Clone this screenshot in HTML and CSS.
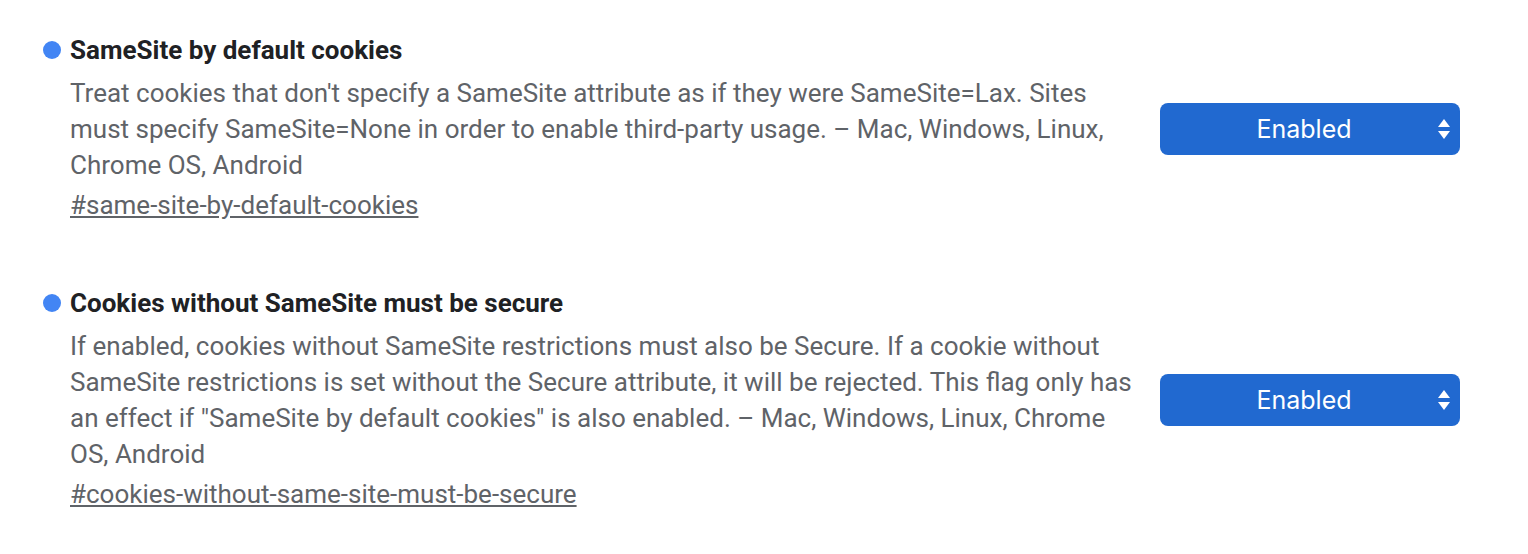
FILE: index.html
```html
<!DOCTYPE html>
<html>
<head>
<meta charset="utf-8">
<link rel="stylesheet" href="styles.css">
</head>
<body>
<div class="page">
  <div class="experiment">
    <h3 class="name"><span class="dot"></span>SameSite by default cookies</h3>
    <div class="row">
      <p class="desc">Treat cookies that don't specify a SameSite attribute as if they were SameSite=Lax. Sites must specify SameSite=None in order to enable third-party usage. – Mac, Windows, Linux, Chrome OS, Android</p>
      <div class="select"><span>Enabled</span>
        <svg class="arrows" width="12" height="20" viewBox="0 0 12 20"><path d="M6 0 L12 8 H0 Z M0 12 H12 L6 20 Z" fill="#fff"/></svg>
      </div>
    </div>
    <a class="link" href="#">#same-site-by-default-cookies</a>
  </div>
  <div class="experiment">
    <h3 class="name"><span class="dot"></span>Cookies without SameSite must be secure</h3>
    <div class="row">
      <p class="desc">If enabled, cookies without SameSite restrictions must also be Secure. If a cookie without SameSite restrictions is set without the Secure attribute, it will be rejected. This flag only has an effect if "SameSite by default cookies" is also enabled. – Mac, Windows, Linux, Chrome OS, Android</p>
      <div class="select"><span>Enabled</span>
        <svg class="arrows" width="12" height="20" viewBox="0 0 12 20"><path d="M6 0 L12 8 H0 Z M0 12 H12 L6 20 Z" fill="#fff"/></svg>
      </div>
    </div>
    <a class="link" href="#">#cookies-without-same-site-must-be-secure</a>
  </div>
</div>
</body>
</html>
```
FILE: styles.css
```css
html, body { margin: 0; padding: 0; background: #fff; }
body { font-family: Roboto, "Noto Sans", Arial, sans-serif; }
.page { padding: 32px 68px 0 43px; display: flex; flex-direction: column; gap: 62px; }
.experiment { display: flex; flex-direction: column; }
.name {
  margin: 0; display: flex; align-items: center; gap: 9px;
  font-size: 26px; font-weight: 700; color: #202124; line-height: 36px;
}
.dot { width: 18px; height: 18px; border-radius: 50%; background: #4285f4; flex: none; }
.row { display: flex; align-items: center; gap: 20px; padding-left: 27px; margin-top: 7px; }
.desc { margin: 0; flex: 1; font-size: 26px; line-height: 36px; color: #5f6368; }
.select {
  flex: none; width: 300px; height: 52px; border-radius: 8px; background: #2169d0;
  color: #fff; font-family: Inter, Roboto, sans-serif; font-size: 25px; display: flex; align-items: center; justify-content: center;
  position: relative;
}
.select span { transform: translateX(-6px); }
.arrows { position: absolute; right: 10px; top: 16px; }
.link { margin-left: 27px; margin-top: 4px; font-size: 26px; line-height: 36px; color: #5f6368; text-decoration: underline; align-self: flex-start; }
```
